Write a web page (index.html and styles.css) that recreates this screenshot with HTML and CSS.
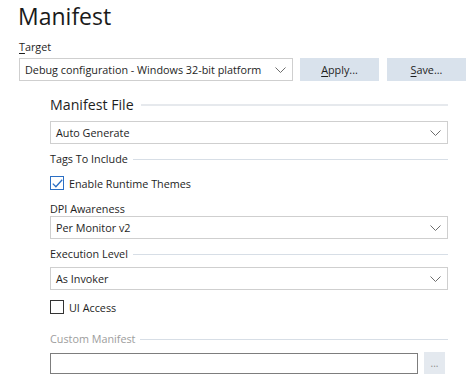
FILE: index.html
```html
<!DOCTYPE html>
<html lang="en">

<head>
    <meta charset="UTF-8">
    <title>Manifest</title>
    <link rel="stylesheet" href="styles.css">
</head>

<body>
    <div class="page">
        <h1 class="page-title">Manifest</h1>

        <!-- Target configuration -->
        <div class="target">
            <div class="field-label"><u>T</u>arget</div>
            <div class="target-row">
                <div class="dropdown dropdown-target">
                    <span>Debug configuration - Windows 32-bit platform</span>
                    <svg class="chevron" width="11" height="6" viewBox="0 0 11 6"><path d="M0.5 0.5 L5.5 5.5 L10.5 0.5" fill="none" stroke="#6d6d6d" stroke-width="1"/></svg>
                </div>
                <button class="btn"><u>A</u>pply...</button>
                <button class="btn"><u>S</u>ave...</button>
            </div>
        </div>

        <div class="section">
            <div class="group-heading large"><span>Manifest File</span><i class="rule"></i></div>
            <div class="dropdown">
                <span>Auto Generate</span>
                <svg class="chevron" width="11" height="6" viewBox="0 0 11 6"><path d="M0.5 0.5 L5.5 5.5 L10.5 0.5" fill="none" stroke="#6d6d6d" stroke-width="1"/></svg>
            </div>

            <div class="group-heading"><span>Tags To Include</span><i class="rule"></i></div>
            <label class="check-row">
                <span class="checkbox checked">
                    <svg width="11" height="9" viewBox="0 0 11 9"><path d="M0.8 4.6 L3.9 7.7 L10.2 0.8" fill="none" stroke="#2b6fc4" stroke-width="1.3"/></svg>
                </span>
                Enable Runtime Themes
            </label>

            <div class="field-label sub">DPI Awareness</div>
            <div class="dropdown">
                <span>Per Monitor v2</span>
                <svg class="chevron" width="11" height="6" viewBox="0 0 11 6"><path d="M0.5 0.5 L5.5 5.5 L10.5 0.5" fill="none" stroke="#6d6d6d" stroke-width="1"/></svg>
            </div>

            <div class="group-heading tight"><span>Execution Level</span><i class="rule"></i></div>
            <div class="dropdown">
                <span>As Invoker</span>
                <svg class="chevron" width="11" height="6" viewBox="0 0 11 6"><path d="M0.5 0.5 L5.5 5.5 L10.5 0.5" fill="none" stroke="#6d6d6d" stroke-width="1"/></svg>
            </div>
            <label class="check-row ui-access">
                <span class="checkbox"></span>
                UI Access
            </label>

            <div class="group-heading disabled"><span>Custom Manifest</span><i class="rule"></i></div>
            <div class="custom-row">
                <div class="text-input"></div>
                <button class="btn btn-browse">...</button>
            </div>
        </div>
    </div>
</body>

</html>
```

FILE: styles.css
```css
/* Reset */
* {
    box-sizing: border-box;
    margin: 0;
    padding: 0;
}

body {
    background: #ffffff;
    font-family: 'Open Sans', 'Noto Sans', sans-serif;
    font-size: 10.8px;
    color: #1e1e1e;
    overflow: hidden;
}

.page {
    padding: 0 0 0 19px;
}

/* Page title */
.page-title {
    font-size: 23px;
    font-weight: 400;
    line-height: 32px;
    color: #1a1a1a;
    margin-left: -1px;
}

u {
    text-decoration-thickness: 1px;
    text-underline-offset: 2px;
}

/* Target row */
.target {
    margin-top: 7px;
}

.field-label {
    line-height: 16px;
    margin-bottom: 3px;
}

.target-row {
    display: flex;
    align-items: center;
}

.dropdown {
    display: flex;
    align-items: center;
    justify-content: space-between;
    height: 23px;
    border: 1px solid #cfcfcf;
    background: #fff;
    padding: 0 6px 0 5px;
    line-height: 21px;
    white-space: nowrap;
}

.dropdown-target {
    width: 274px;
    margin-right: 7px;
}

.chevron {
    flex: none;
}

.btn {
    font-family: inherit;
    font-size: inherit;
    color: #1e1e1e;
    width: 79px;
    height: 23px;
    border: none;
    background: #d9e2ec;
    margin-right: 8px;
}

/* Settings section */
.section {
    width: 398px;
    margin-left: 31px;
    margin-top: 14px;
}

.group-heading {
    display: flex;
    align-items: center;
    line-height: 16px;
    margin: 7px 0 8px;
}

.group-heading .rule {
    flex: 1;
    height: 1px;
    background: #d7dee6;
    margin-left: 5px;
}

.group-heading.large {
    font-size: 14.2px;
    line-height: 20px;
    margin: 0 0 6px;
}

.group-heading.large .rule {
    margin-left: 7px;
    height: 2px;
    background: #e6e9ed;
}

.group-heading.tight {
    margin-bottom: 5px;
}

.group-heading.disabled {
    color: #9d9d9d;
    margin: 16px 0 5px;
}

.field-label.sub {
    margin: 10px 0 -1px;
}

.check-row {
    display: flex;
    align-items: center;
    gap: 5px;
    height: 16px;
}

.checkbox {
    display: flex;
    align-items: center;
    justify-content: center;
    width: 14px;
    height: 14px;
    border: 1px solid #333333;
    background: #fff;
}

.checkbox.checked {
    border-color: #2b6fc4;
}

.ui-access {
    margin-top: 9px;
}

.custom-row {
    display: flex;
    align-items: center;
    gap: 6px;
}

.text-input {
    width: 368px;
    height: 21px;
    border: 1px solid #7d7d7d;
    background: #fff;
}

.btn-browse {
    width: 21px;
    height: 22px;
    margin: 0;
    background: #e4e9ef;
    color: #8c8c8c;
    font-size: 10px;
}
```
